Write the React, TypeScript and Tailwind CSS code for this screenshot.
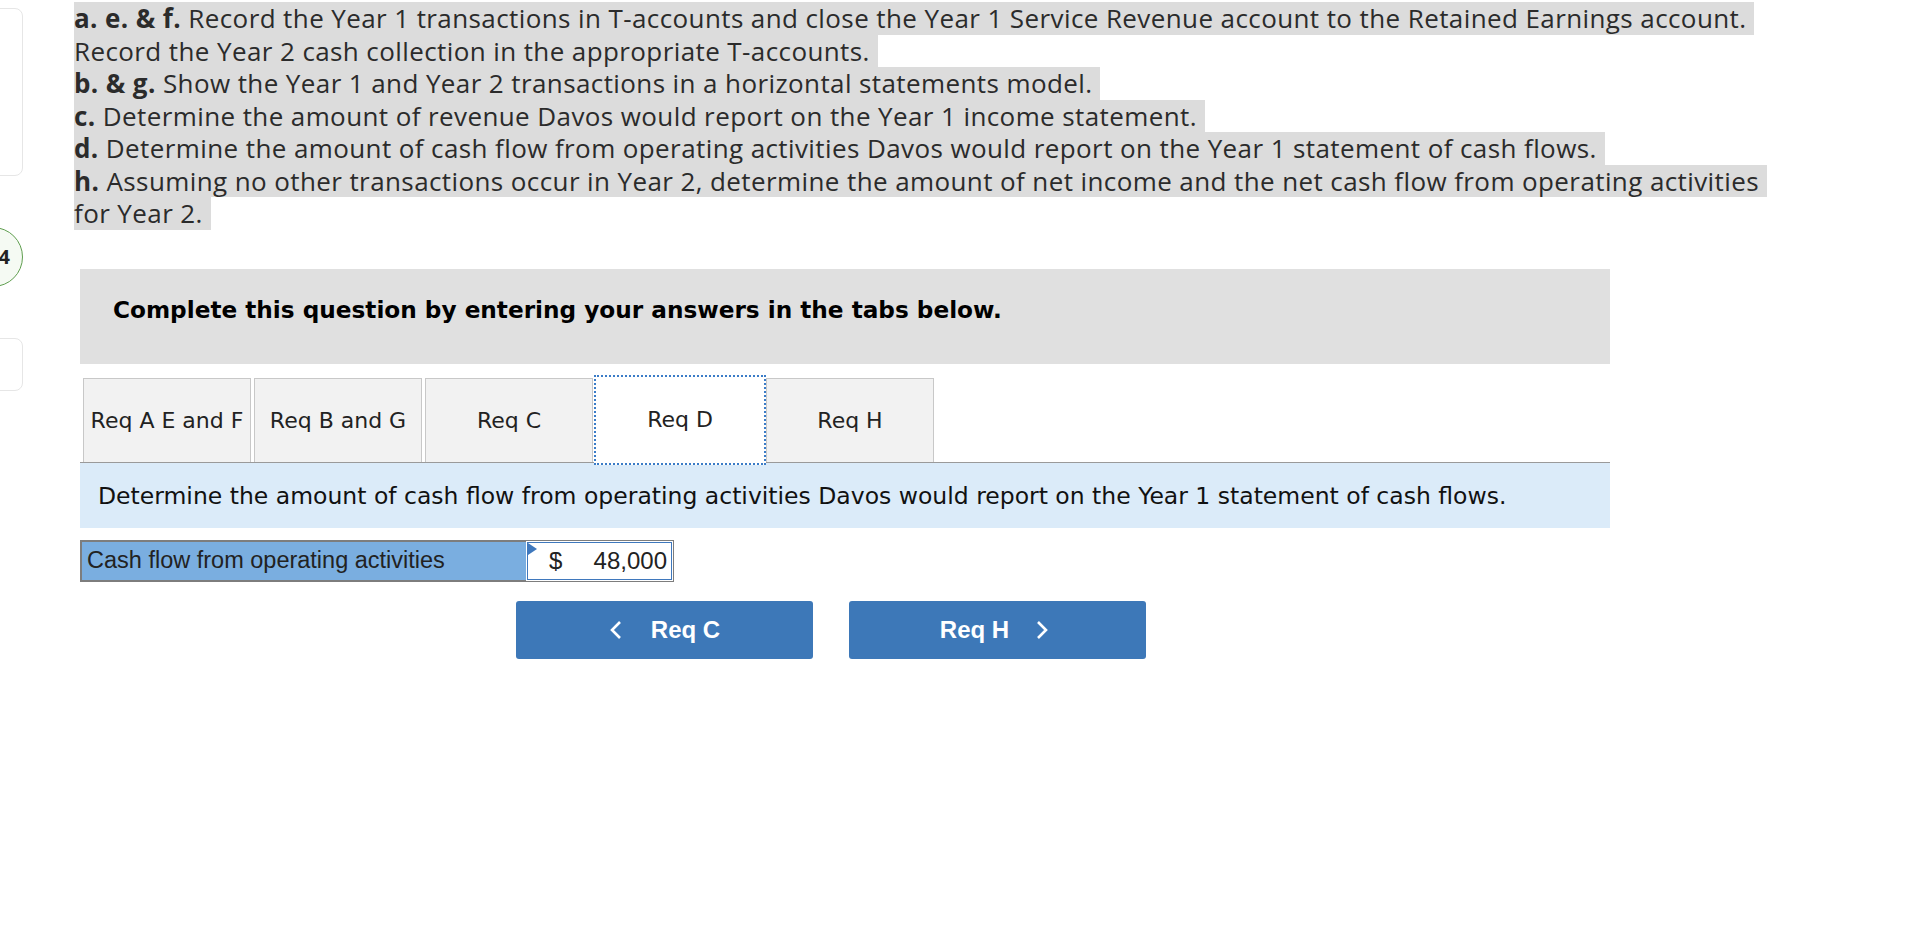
const lines: { bold?: string; text: string }[] = [
  {
    bold: 'a. e. & f.',
    text: ' Record the Year 1 transactions in T-accounts and close the Year 1 Service Revenue account to the Retained Earnings account.',
  },
  { text: 'Record the Year 2 cash collection in the appropriate T-accounts.' },
  { bold: 'b. & g.', text: ' Show the Year 1 and Year 2 transactions in a horizontal statements model.' },
  { bold: 'c.', text: ' Determine the amount of revenue Davos would report on the Year 1 income statement.' },
  {
    bold: 'd.',
    text: ' Determine the amount of cash flow from operating activities Davos would report on the Year 1 statement of cash flows.',
  },
  {
    bold: 'h.',
    text: ' Assuming no other transactions occur in Year 2, determine the amount of net income and the net cash flow from operating activities',
  },
  { text: 'for Year 2.' },
];

const tabs = ['Req A E and F', 'Req B and G', 'Req C', 'Req D', 'Req H'];

function Chevron({ dir }: { dir: 'left' | 'right' }) {
  return (
    <svg width="13" height="20" viewBox="0 0 13 20" fill="none" stroke="currentColor" strokeWidth="2.6" aria-hidden="true">
      {dir === 'left' ? <polyline points="11,2 3,10 11,18" /> : <polyline points="2,2 10,10 2,18" />}
    </svg>
  );
}

function App() {
  return (
    <div className="flex min-h-screen bg-white text-[#333]">
      {/* left rail, mostly scrolled off screen */}
      <aside className="flex w-[23px] shrink-0 flex-col overflow-hidden">
        <div className="mt-[8px] -ml-[40px] h-[168px] w-[63px] shrink-0 rounded-[8px] border border-[#e6e6e6]" />
        <div className="mt-[51px] -ml-[57px] flex h-[60px] w-[80px] shrink-0 items-center justify-end rounded-full border border-[#5f9e4f] bg-[#f5faf3] pr-[12px] font-['Open_Sans',sans-serif] text-[20px] font-bold text-[#222]">
          4
        </div>
        <div className="mt-[51px] -ml-[40px] h-[53px] w-[63px] shrink-0 rounded-[8px] border border-[#e6e6e6]" />
      </aside>

      <main className="ml-[51px] flex flex-1 flex-col">
        <div className="mt-[2px] font-['Open_Sans',sans-serif] text-[26px] leading-[32.5px] tracking-[0.4px] text-[#2b2b2b]">
          {lines.map((l, i) => (
            <div key={i} className="w-fit bg-[#dcdcdc] pr-[8px] whitespace-pre">
              {l.bold && <b className="font-bold">{l.bold}</b>}
              {l.text}
            </div>
          ))}
        </div>

        <div className="mt-[39px] ml-[6px] w-[1530px] font-['DejaVu_Sans',Verdana,sans-serif]">
          <div className="h-[95px] bg-[#e0e0e0] pt-[24px] pl-[33px] text-[23.2px] font-bold text-black">
            Complete this question by entering your answers in the tabs below.
          </div>

          <div className="mt-[14px] flex border-b border-[#9a9a9a] pl-[3px]">
            {tabs.map((t) =>
              t === 'Req D' ? (
                <div
                  key={t}
                  className="relative z-10 -mt-[3px] -mb-[3px] -ml-[2px] flex h-[90px] w-[172px] items-center justify-center border-2 border-dotted border-[#3b7cc7] bg-white text-[22px] text-[#222]"
                >
                  {t}
                </div>
              ) : (
                <div
                  key={t}
                  className="mr-[3px] flex h-[84px] w-[168px] items-center justify-center border border-b-0 border-[#c8c8c8] bg-[#f2f2f2] text-[22px] text-[#222]"
                >
                  {t}
                </div>
              ),
            )}
          </div>

          <div className="flex h-[65px] items-center bg-[#dbebf9] pt-[3px] pl-[18px] text-[23.5px] text-[#111]">
            Determine the amount of cash flow from operating activities Davos would report on the Year 1 statement of cash flows.
          </div>

          <div className="mt-[12px] flex h-[42px] font-['Liberation_Sans',Arial,sans-serif] text-[23.5px] text-[#222]">
            <div className="flex w-[446px] items-center border-y-2 border-l-2 border-[#7d7d7d] bg-[#7aaee0] pl-[5px]">
              Cash flow from operating activities
            </div>
            <div className="flex w-[148px] border-y border-r border-[#7d7d7d] bg-white p-[1px]">
              <div className="relative flex flex-1 items-center justify-between border border-[#3f78bd] pr-[4px] pl-[21px] text-[24px]">
                <span className="absolute top-0 left-0 h-0 w-0 border-t-[6px] border-b-[6px] border-l-[9px] border-t-transparent border-b-transparent border-l-[#3f78bd]" />
                <span>$</span>
                <span>48,000</span>
              </div>
            </div>
          </div>

          <div className="mt-[19px] flex gap-[36px] pl-[436px] font-['Liberation_Sans',Arial,sans-serif] text-[24px] font-bold text-white">
            <button className="flex h-[58px] w-[297px] items-center justify-center gap-[29px] rounded-[3px] bg-[#3d78b8]">
              <Chevron dir="left" />
              <span>Req C</span>
            </button>
            <button className="flex h-[58px] w-[297px] items-center justify-center gap-[27px] rounded-[3px] bg-[#3d78b8] pr-[6px]">
              <span>Req H</span>
              <Chevron dir="right" />
            </button>
          </div>
        </div>
      </main>
    </div>
  );
}

export default App;
